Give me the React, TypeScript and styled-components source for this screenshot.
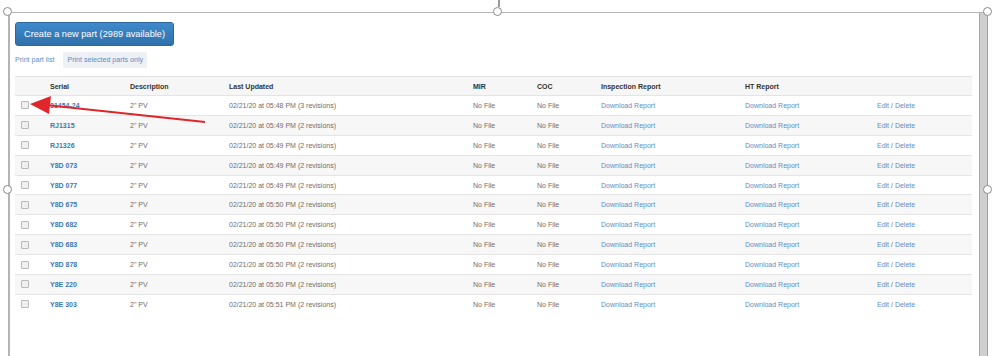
import React from 'react';
import styled, { createGlobalStyle } from 'styled-components';

const GlobalStyle = createGlobalStyle`
  html, body {
    margin: 0;
    padding: 0;
    background: #ffffff;
  }
  body {
    font-family: "Liberation Sans", Arial, sans-serif;
  }
`;

interface Part {
  serial: string;
  updated: string;
  revisions: number;
}

const parts: Part[] = [
  { serial: '31454-24', updated: '02/21/20 at 05:48 PM', revisions: 3 },
  { serial: 'RJ1315', updated: '02/21/20 at 05:49 PM', revisions: 2 },
  { serial: 'RJ1326', updated: '02/21/20 at 05:49 PM', revisions: 2 },
  { serial: 'Y8D 073', updated: '02/21/20 at 05:49 PM', revisions: 2 },
  { serial: 'Y8D 077', updated: '02/21/20 at 05:49 PM', revisions: 2 },
  { serial: 'Y8D 675', updated: '02/21/20 at 05:50 PM', revisions: 2 },
  { serial: 'Y8D 682', updated: '02/21/20 at 05:50 PM', revisions: 2 },
  { serial: 'Y8D 683', updated: '02/21/20 at 05:50 PM', revisions: 2 },
  { serial: 'Y8D 878', updated: '02/21/20 at 05:50 PM', revisions: 2 },
  { serial: 'Y8E 220', updated: '02/21/20 at 05:50 PM', revisions: 2 },
  { serial: 'Y8E 303', updated: '02/21/20 at 05:51 PM', revisions: 2 },
];

const columns = [
  { label: '', width: 31 },
  { label: 'Serial', width: 80 },
  { label: 'Description', width: 99 },
  { label: 'Last Updated', width: 244 },
  { label: 'MIR', width: 64 },
  { label: 'COC', width: 64 },
  { label: 'Inspection Report', width: 144 },
  { label: 'HT Report', width: 132 },
  { label: '', width: 99 },
];

const Canvas = styled.div`
  position: relative;
  width: 1000px;
  height: 356px;
  overflow: hidden;
  background: #fff;
`;

const Frame = styled.div`
  display: flex;
  margin: 12px 0 0 8px;
  width: 980px;
  height: 344px;
  border-top: 1.5px solid #b4b4b4;
  border-left: 2px solid #b4b4b4;
  box-sizing: border-box;
`;

const Content = styled.div`
  flex: 1;
  padding: 9px 7px 0 5px;
`;

const RightBar = styled.div`
  width: 7px;
  background: #cfcfcf;
  border-left: 1px solid #a9a9a9;
  border-right: 1px solid #9c9c9c;
`;

const CreateButton = styled.button`
  display: block;
  width: 159px;
  height: 24px;
  padding: 0;
  border: 1px solid #2b679c;
  border-radius: 3px;
  background: linear-gradient(#3f8acb, #2f70ab);
  color: #fff;
  font-family: inherit;
  font-size: 9.2px;
  cursor: pointer;
`;

const LinkBar = styled.div`
  display: flex;
  align-items: center;
  gap: 9px;
  margin-top: 7px;
  height: 14px;
`;

const PrintLink = styled.a<{ $boxed?: boolean }>`
  font-size: 7.1px;
  color: #5b8fc4;
  text-decoration: none;
  padding: ${(p) => (p.$boxed ? '4px 4px' : '0')};
  background: ${(p) => (p.$boxed ? '#edf0f4' : 'transparent')};
  border-radius: 2px;
`;

const Table = styled.table`
  margin-top: 9px;
  width: 957px;
  border-collapse: collapse;
  table-layout: fixed;
  font-size: 7px;
`;

const HeadCell = styled.th`
  height: 18px;
  padding: 0 4px;
  text-align: left;
  font-weight: bold;
  color: #333;
  background: #f6f6f6;
  border-top: 1px solid #e2e2e2;
`;

const Row = styled.tr<{ $striped: boolean }>`
  background: ${(p) => (p.$striped ? '#f7f7f7' : '#fff')};
`;

const Cell = styled.td`
  height: 18.9px;
  padding: 0 4px;
  color: #6e6e6e;
  border-top: 1px solid #e4e4e4;
  white-space: nowrap;
`;

const SerialLink = styled.a`
  color: #3c79b5;
  font-weight: bold;
  text-decoration: none;
`;

const PlainLink = styled.a`
  color: #5d8fc6;
  text-decoration: none;
`;

const Checkbox = styled.span`
  display: block;
  width: 6px;
  height: 6px;
  margin-left: 2px;
  border: 1px solid #b9b9b9;
  border-radius: 1px;
  background: #f0f0f0;
`;

const Handle = styled.div<{ $x: number; $y: number }>`
  position: absolute;
  left: ${(p) => p.$x - 5}px;
  top: ${(p) => p.$y - 5}px;
  width: 7px;
  height: 7px;
  border: 1.5px solid #8a8a8a;
  border-radius: 50%;
  background: #fff;
`;

const RotateStem = styled.div`
  position: absolute;
  left: 498px;
  top: 0;
  width: 1.5px;
  height: 7px;
  background: #9a9a9a;
`;

const Arrow = styled.svg`
  position: absolute;
  left: 0;
  top: 0;
  pointer-events: none;
`;

const handles: [number, number][] = [
  [8, 12],
  [498, 12],
  [988, 12],
  [8, 190],
  [988, 190],
];

export default function App() {
  return (
    <>
      <GlobalStyle />
      <Canvas>
        <Frame>
          <Content>
            <CreateButton>Create a new part (2989 available)</CreateButton>
            <LinkBar>
              <PrintLink href="#">Print part list</PrintLink>
              <PrintLink href="#" $boxed>
                Print selected parts only
              </PrintLink>
            </LinkBar>
            <Table>
              <colgroup>
                {columns.map((c, i) => (
                  <col key={i} style={{ width: c.width }} />
                ))}
              </colgroup>
              <thead>
                <tr>
                  {columns.map((c, i) => (
                    <HeadCell key={i}>{c.label}</HeadCell>
                  ))}
                </tr>
              </thead>
              <tbody>
                {parts.map((part, i) => (
                  <Row key={part.serial} $striped={i % 2 === 1}>
                    <Cell>
                      <Checkbox />
                    </Cell>
                    <Cell>
                      <SerialLink href="#">{part.serial}</SerialLink>
                    </Cell>
                    <Cell>2" PV</Cell>
                    <Cell>
                      {part.updated} ({part.revisions} revisions)
                    </Cell>
                    <Cell>No File</Cell>
                    <Cell>No File</Cell>
                    <Cell>
                      <PlainLink href="#">Download Report</PlainLink>
                    </Cell>
                    <Cell>
                      <PlainLink href="#">Download Report</PlainLink>
                    </Cell>
                    <Cell>
                      <PlainLink href="#">Edit</PlainLink> / <PlainLink href="#">Delete</PlainLink>
                    </Cell>
                  </Row>
                ))}
              </tbody>
            </Table>
          </Content>
          <RightBar />
        </Frame>

        <RotateStem />
        {handles.map(([x, y]) => (
          <Handle key={`${x}-${y}`} $x={x} $y={y} />
        ))}

        <Arrow width="1000" height="356" viewBox="0 0 1000 356">
          <line x1="205" y1="122" x2="46" y2="105" stroke="#e0262b" strokeWidth="2.2" />
          <polygon points="30,104 51,96 49,114" fill="#e0262b" />
        </Arrow>
      </Canvas>
    </>
  );
}
